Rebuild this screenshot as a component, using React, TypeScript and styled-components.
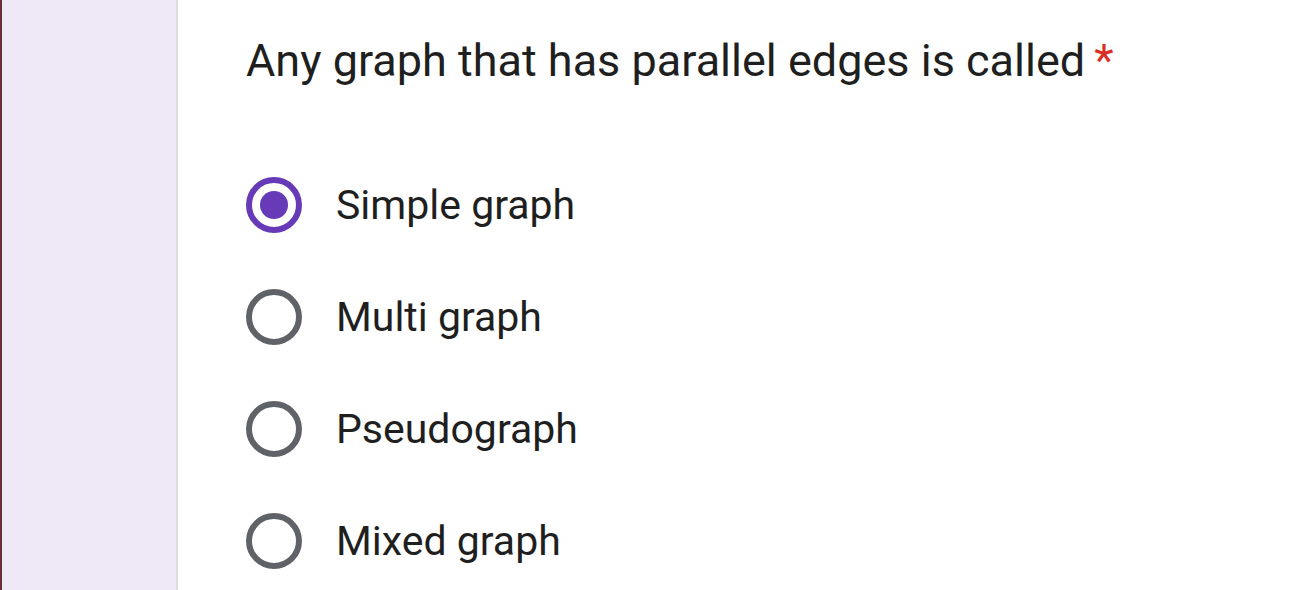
import React, { useState } from "react";
import styled, { createGlobalStyle } from "styled-components";

const OPTIONS = ["Simple graph", "Multi graph", "Pseudograph", "Mixed graph"];

const GlobalStyle = createGlobalStyle`
  html, body {
    margin: 0;
    padding: 0;
    background: #ffffff;
    font-family: Roboto, "Liberation Sans", Arial, sans-serif;
    color: #202124;
  }
`;

export default function App() {
  const [selected, setSelected] = useState(OPTIONS[0]);

  return (
    <>
      <GlobalStyle />
      <Page>
        <Sidebar />
        <QuestionCard>
          <Title>
            Any graph that has parallel edges is called
            <Required>*</Required>
          </Title>
          <OptionList>
            {OPTIONS.map((option) => (
              <OptionRow key={option} onClick={() => setSelected(option)}>
                <Radio $checked={selected === option}>
                  {selected === option && <RadioDot />}
                </Radio>
                <OptionLabel>{option}</OptionLabel>
              </OptionRow>
            ))}
          </OptionList>
        </QuestionCard>
      </Page>
    </>
  );
}

const Page = styled.div`
  display: flex;
  height: 590px;
  overflow: hidden;
`;

const Sidebar = styled.div`
  width: 174px;
  flex-shrink: 0;
  background: #efe9f7;
  border-left: 2px solid #6a2e3a;
  border-right: 2px solid #dadce0;
`;

const QuestionCard = styled.div`
  flex: 1;
  padding: 31px 0 0 68px;
`;

const Title = styled.div`
  font-size: 45px;
  line-height: 60px;
  color: #1f1f1f;
`;

const Required = styled.span`
  color: #d93025;
  margin-left: 9px;
`;

const OptionList = styled.div`
  display: flex;
  flex-direction: column;
  gap: 56px;
  margin-top: 86px;
`;

const OptionRow = styled.label`
  display: flex;
  align-items: center;
  gap: 34px;
  height: 56px;
  cursor: pointer;
`;

const Radio = styled.span<{ $checked: boolean }>`
  box-sizing: border-box;
  width: 56px;
  height: 56px;
  border-radius: 50%;
  border: 6px solid ${(p) => (p.$checked ? "#673ab7" : "#5f6368")};
  display: flex;
  align-items: center;
  justify-content: center;
  flex-shrink: 0;
`;

const RadioDot = styled.span`
  width: 28px;
  height: 28px;
  border-radius: 50%;
  background: #673ab7;
`;

const OptionLabel = styled.span`
  font-size: 41px;
  line-height: 56px;
  color: #1f1f1f;
`;
